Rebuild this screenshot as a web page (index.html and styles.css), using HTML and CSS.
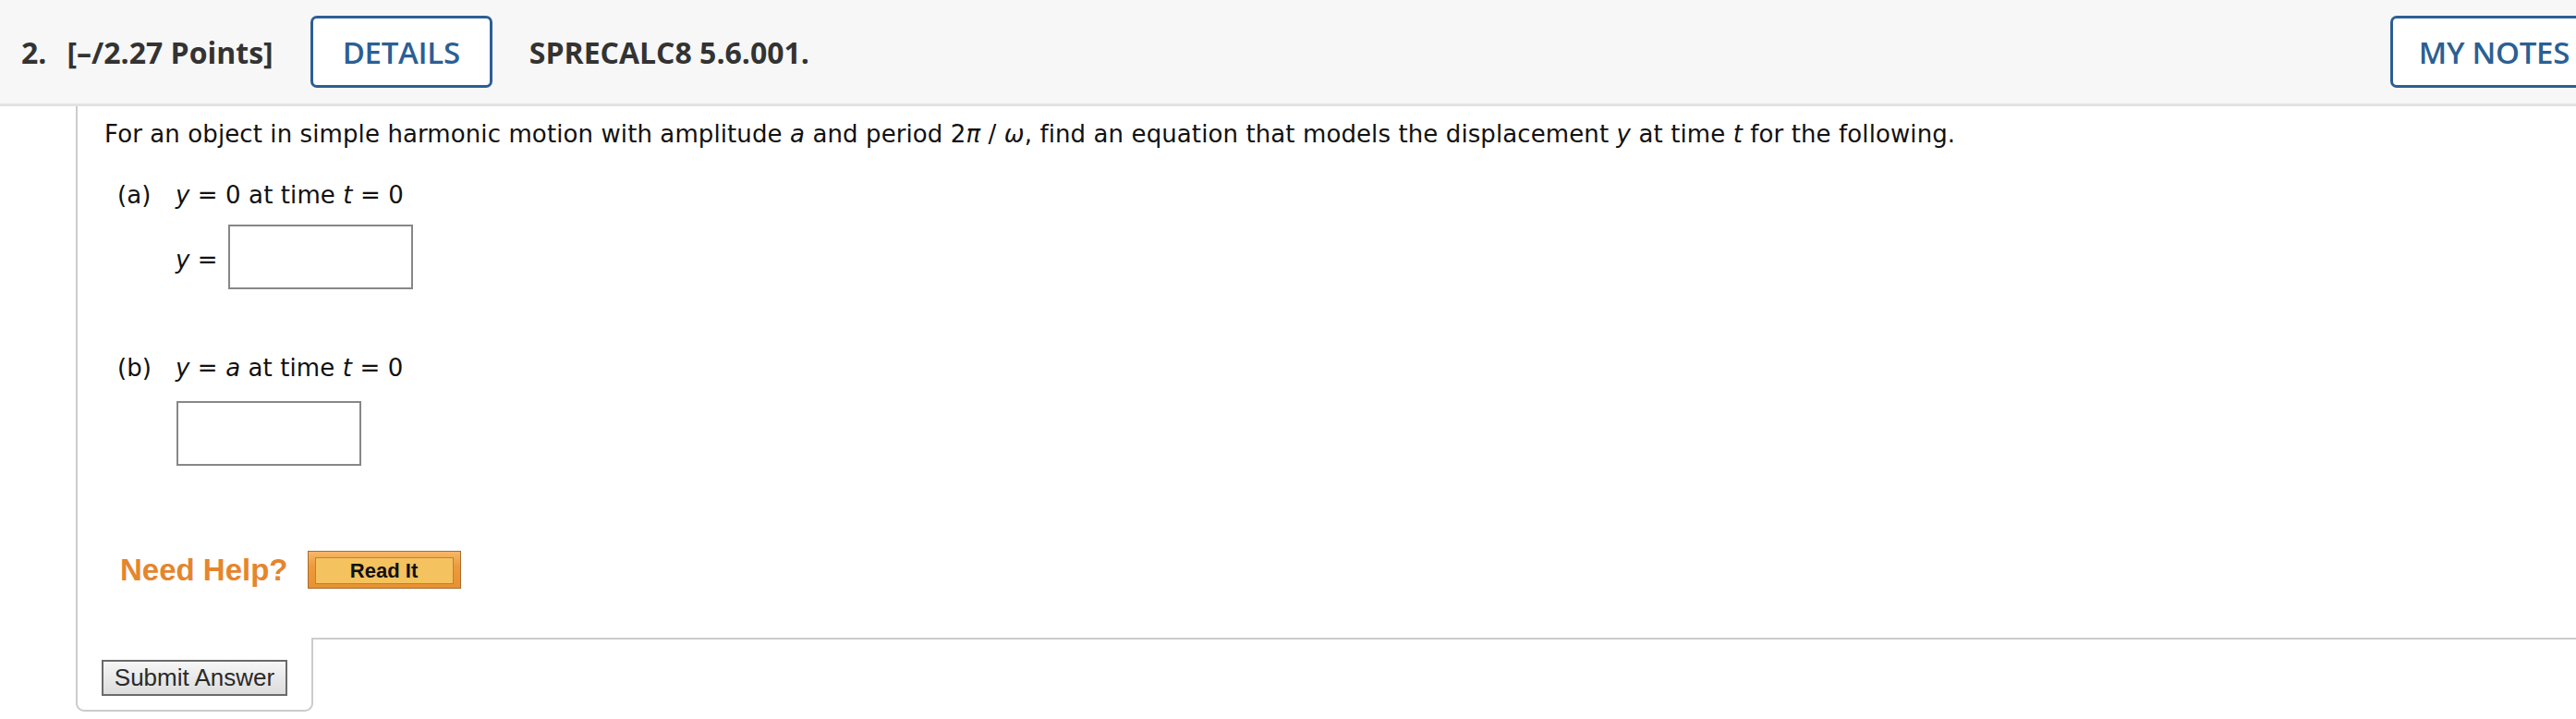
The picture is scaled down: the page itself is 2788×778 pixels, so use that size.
FILE: index.html
```html
<!DOCTYPE html>
<html lang="en">
<head>
<meta charset="utf-8">
<title>Question 2</title>
<link rel="stylesheet" href="styles.css">
</head>
<body>
<header class="qhead">
  <span class="qnum">2.</span>
  <span class="qpoints">[–/2.27 Points]</span>
  <button class="hbtn details">DETAILS</button>
  <span class="qcode">SPRECALC8 5.6.001.</span>
  <button class="hbtn notes">MY NOTES</button>
</header>
<main class="question">
  <p class="prompt">For an object in simple harmonic motion with amplitude <i>a</i> and period 2<i>π</i> / <i>ω</i>, find an equation that models the displacement <i>y</i> at time <i>t</i> for the following.</p>
  <div class="part">
    <p class="partline"><span class="plabel">(a)</span><i>y</i> = 0 at time <i>t</i> = 0</p>
    <div class="answer indent-a"><span class="lhs"><i>y</i> =</span><span class="box"></span></div>
  </div>
  <div class="part part-b">
    <p class="partline"><span class="plabel">(b)</span><i>y</i> = <i>a</i> at time <i>t</i> = 0</p>
    <div class="answer indent-b"><span class="box"></span></div>
  </div>
  <div class="help">
    <span class="needhelp">Need Help?</span>
    <span class="readit"><span class="readit-in">Read It</span></span>
  </div>
</main>
<div class="footer">
  <div class="tab"><button class="submit">Submit Answer</button></div>
  <div class="rest"></div>
</div>
</body>
</html>
```
FILE: styles.css
```css
html, body {
  margin: 0;
  padding: 0;
  background: #fff;
  overflow: hidden;
}

.qhead {
  display: flex;
  align-items: center;
  height: 112px;
  padding-left: 23px;
  background: #f7f7f7;
  border-bottom: 3px solid #e2e2e2;
  font-family: "Open Sans", "Liberation Sans", sans-serif;
  font-size: 32px;
  color: #333;
  overflow: hidden;
}

.qnum, .qpoints, .qcode {
  font-weight: 700;
}

.qnum {
  margin-right: 22px;
}

.hbtn {
  box-sizing: border-box;
  height: 78px;
  padding: 0 32px;
  border: 3px solid #2b5f94;
  border-radius: 7px;
  background: #fff;
  color: #2b5f94;
  font-family: "Open Sans", "Liberation Sans", sans-serif;
  font-size: 33px;
  font-weight: 600;
  letter-spacing: -0.3px;
}

.details {
  margin: 0 40px 0 40px;
}

.notes {
  margin-left: auto;
  margin-right: -30px;
  padding: 0 34px 0 28px;
}

.question {
  display: block;
  margin-left: 82px;
  border-left: 2px solid #cccccc;
  padding: 15px 0 53px 29px;
  font-family: "DejaVu Sans", Verdana, sans-serif;
  font-size: 26px;
  line-height: 30px;
  letter-spacing: 0.1px;
  color: #111;
}

.question i {
  font-style: italic;
}

.prompt {
  margin: 0;
}

.part {
  margin-top: 36px;
}

.part-b {
  margin-top: 70px;
}

.partline {
  margin: 0 0 0 14px;
}

.plabel {
  display: inline-block;
  width: 63px;
}

.answer {
  display: flex;
  align-items: center;
  margin-top: 17px;
}

.part-b .answer {
  margin-top: 21px;
}

.indent-a {
  padding-left: 77px;
}

.indent-b {
  padding-left: 78px;
}

.lhs {
  margin-right: 11px;
  position: relative;
  top: 3px;
}

.box {
  display: block;
  box-sizing: border-box;
  width: 200px;
  height: 70px;
  border: 2px solid #878787;
  background: #fff;
}

.help {
  display: flex;
  align-items: center;
  margin-top: 92px;
  padding-left: 17px;
}

.needhelp {
  font-family: "Liberation Sans", Arial, sans-serif;
  font-weight: 700;
  font-size: 33px;
  line-height: 40px;
  letter-spacing: 0;
  color: #e5852e;
  margin-right: 21px;
}

.readit {
  display: block;
  box-sizing: border-box;
  width: 166px;
  height: 41px;
  padding: 6px 7px 4px 7px;
  border: 1px solid #a86c32;
  background: linear-gradient(#f6b868, #ee9a3c 40%, #e8922f);
}

.readit-in {
  display: flex;
  align-items: center;
  justify-content: center;
  box-sizing: border-box;
  height: 29px;
  border: 1px solid #b98240;
  background: #f4c25e;
  font-family: "Liberation Sans", Arial, sans-serif;
  font-weight: 700;
  font-size: 22px;
  letter-spacing: 0;
  color: #111;
}

.footer {
  display: flex;
  margin-left: 82px;
}

.tab {
  box-sizing: border-box;
  width: 257px;
  height: 80px;
  padding: 24px 0 0 26px;
  border-left: 2px solid #cccccc;
  border-right: 2px solid #cccccc;
  border-bottom: 2px solid #cccccc;
  border-radius: 0 0 9px 9px;
}

.submit {
  box-sizing: border-box;
  width: 201px;
  height: 39px;
  padding: 0;
  border: 2px solid #6a6a6a;
  background: linear-gradient(#f6f6f6, #dcdcdc);
  font-family: "Liberation Sans", Arial, sans-serif;
  font-size: 26px;
  color: #2a2a2a;
}

.rest {
  flex: 1;
  border-top: 2px solid #cccccc;
}
```
